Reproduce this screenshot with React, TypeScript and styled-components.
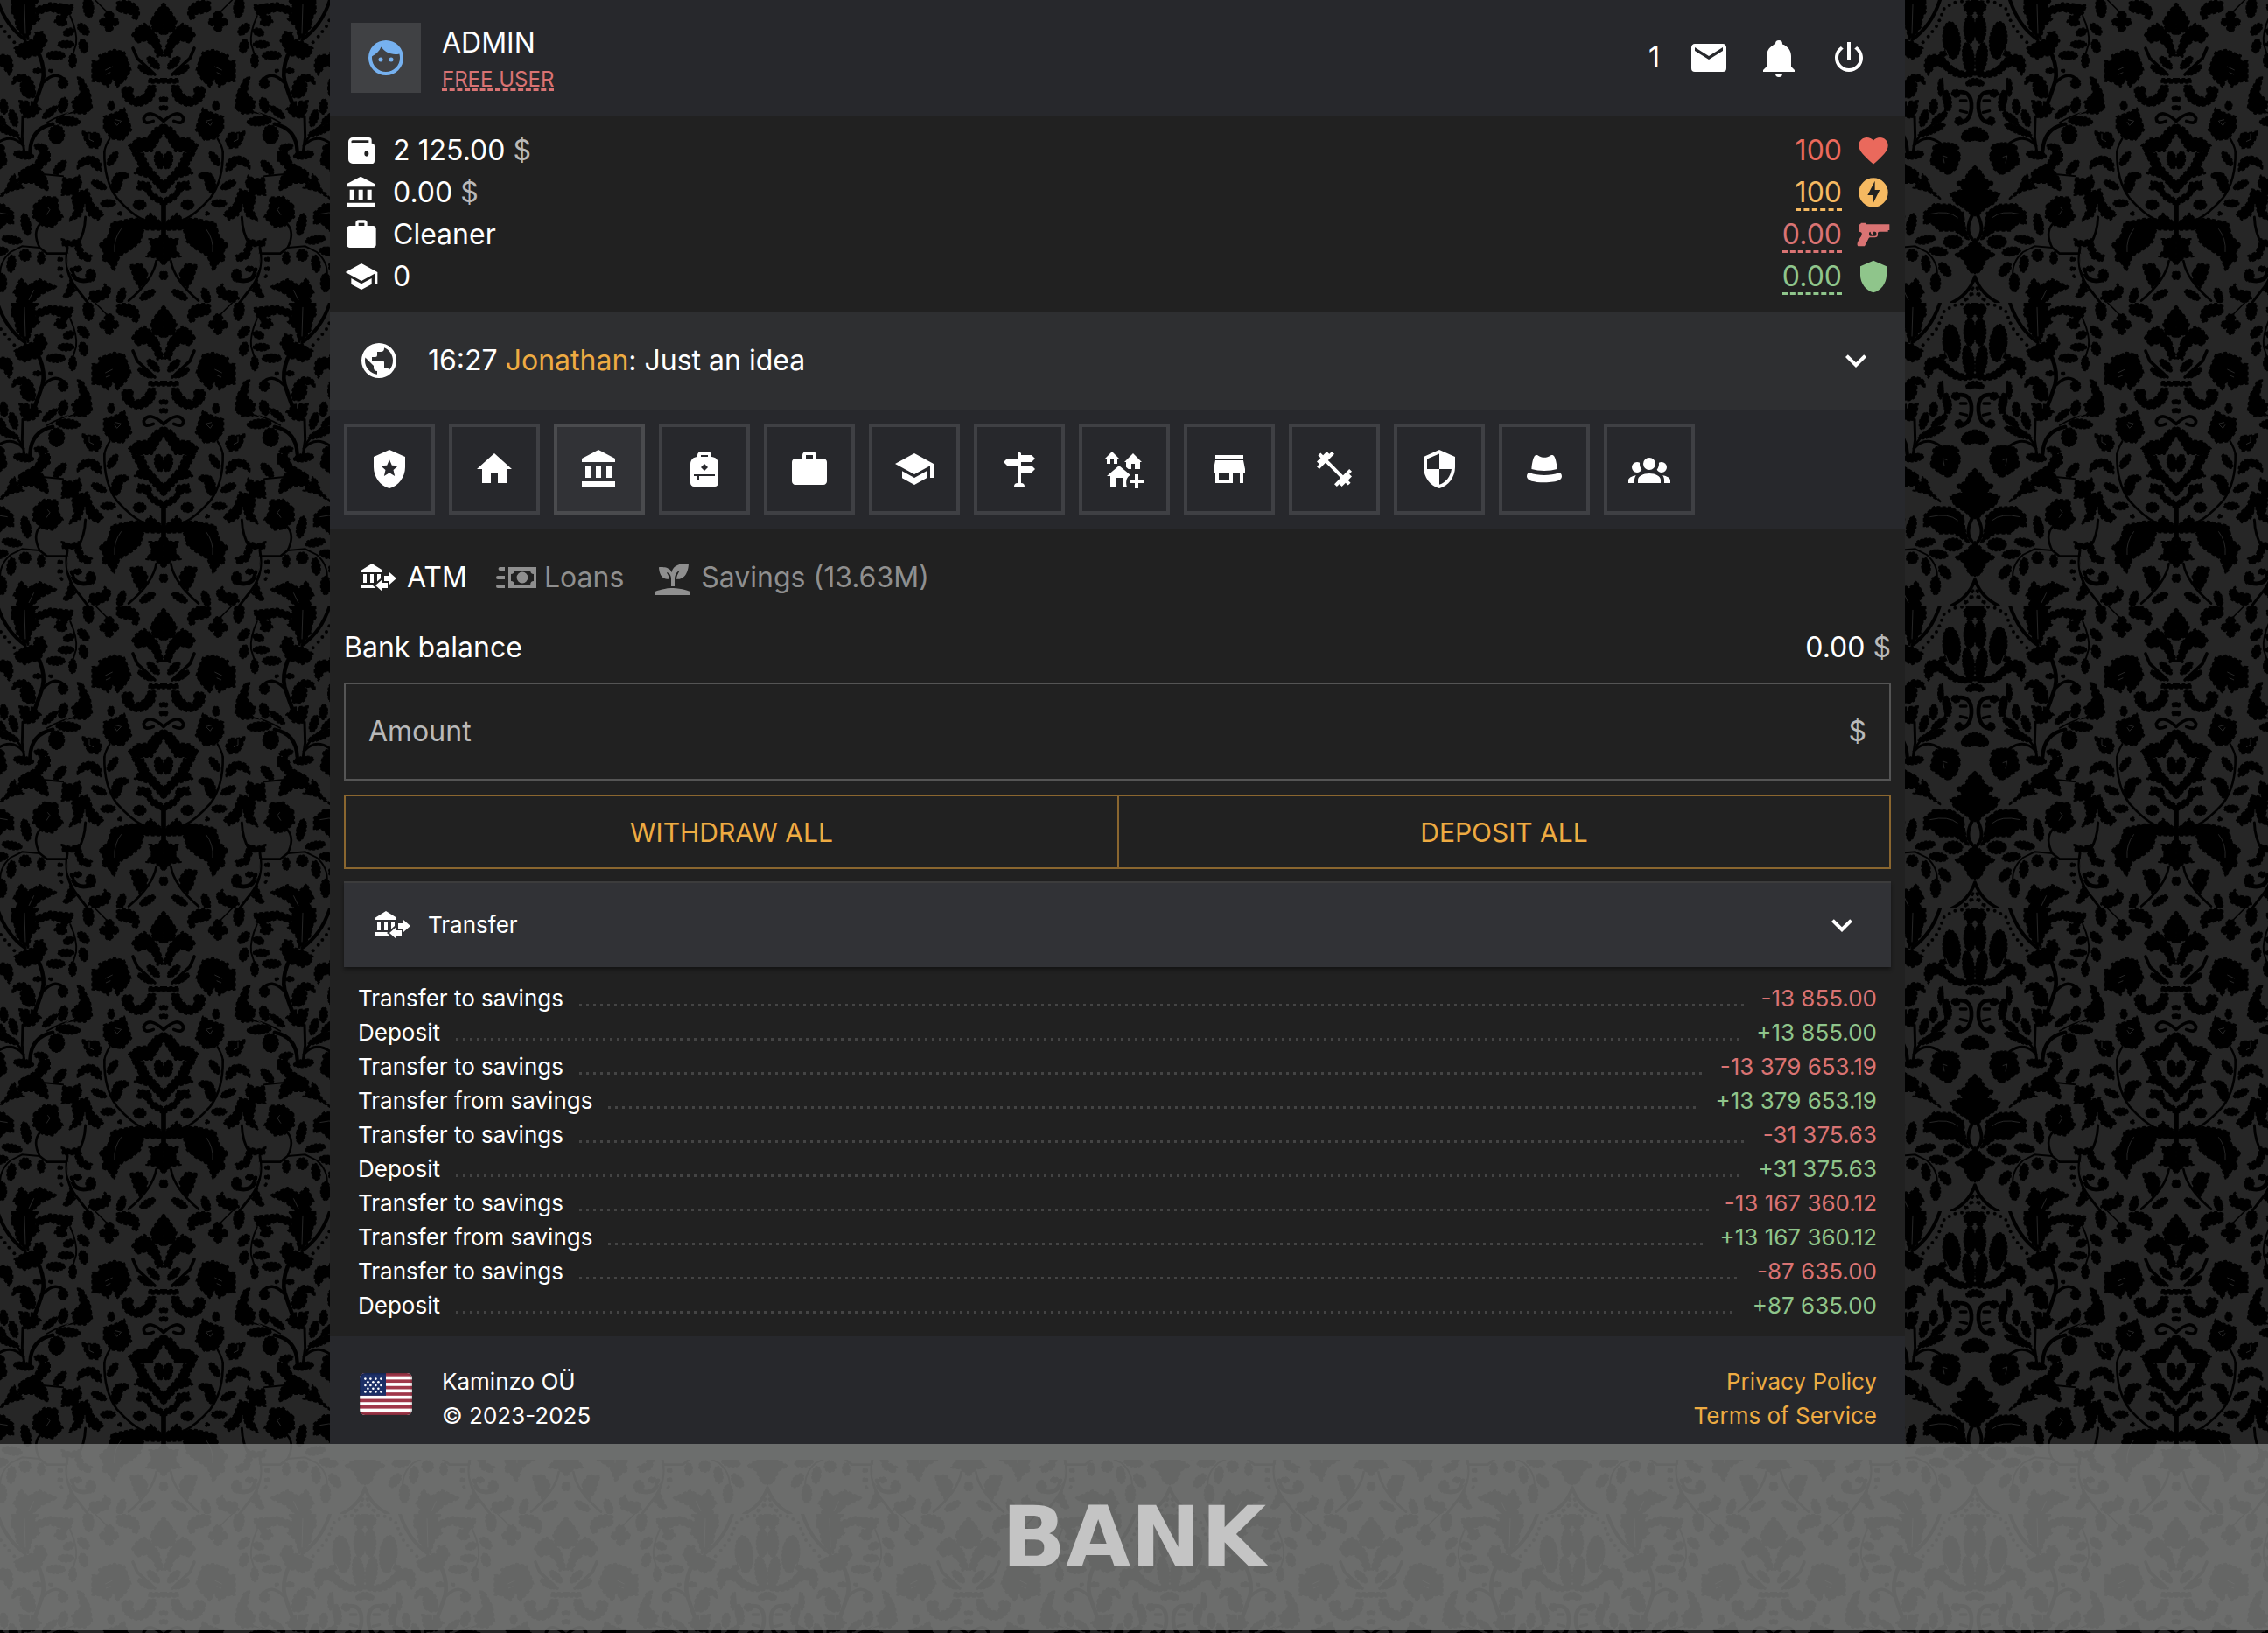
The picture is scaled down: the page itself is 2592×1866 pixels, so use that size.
import React from "react";
import styled, { createGlobalStyle } from "styled-components";

const color = {
  wall: "#262626",
  bar: "#27282c",
  body: "#212121",
  chat: "#2e2f31",
  panel: "#313236",
  muted: "#8f8f8f",
  soft: "#b9b9b9",
  accent: "#eeab42",
  accentLine: "#8a662f",
  red: "#d97373",
  heart: "#ea695c",
  amber: "#f5b961",
  green: "#8fc58b",
};

const GlobalStyle = createGlobalStyle`
  *, *::before, *::after { box-sizing: border-box; }
  body {
    margin: 0;
    background: ${color.wall};
    color: #fff;
    font-family: Inter, "Noto Sans", "Liberation Sans", sans-serif;
    font-size: 32px;
    line-height: 48px;
  }
  button, input { font: inherit; color: inherit; }
  ul { list-style: none; margin: 0; padding: 0; }
`;

/* ---------- icons ---------- */

const icons = {
  face: "M9,11.75A1.25,1.25 0 0,0 7.75,13A1.25,1.25 0 0,0 9,14.25A1.25,1.25 0 0,0 10.25,13A1.25,1.25 0 0,0 9,11.75M15,11.75A1.25,1.25 0 0,0 13.75,13A1.25,1.25 0 0,0 15,14.25A1.25,1.25 0 0,0 16.25,13A1.25,1.25 0 0,0 15,11.75M12,2A10,10 0 0,0 2,12A10,10 0 0,0 12,22A10,10 0 0,0 22,12A10,10 0 0,0 12,2M12,20C7.59,20 4,16.41 4,12C4,11.71 4,11.42 4.05,11.14C6.41,10.09 8.28,8.16 9.26,5.77C11.07,8.33 14.05,10 17.42,10C18.2,10 18.95,9.91 19.67,9.74C19.88,10.45 20,11.21 20,12C20,16.41 16.41,20 12,20Z",
  mail: "M20,8L12,13L4,8V6L12,11L20,6M20,4H4C2.89,4 2,4.89 2,6V18A2,2 0 0,0 4,20H20A2,2 0 0,0 22,18V6C22,4.89 21.1,4 20,4Z",
  bell: "M21,19V20H3V19L5,17V11C5,7.9 7.03,5.17 10,4.29C10,4.19 10,4.1 10,4A2,2 0 0,1 12,2A2,2 0 0,1 14,4C14,4.1 14,4.19 14,4.29C16.97,5.17 19,7.9 19,11V17L21,19M14,21A2,2 0 0,1 12,23A2,2 0 0,1 10,21",
  power: "M16.56,5.44L15.11,6.89C16.84,7.94 18,9.83 18,12A6,6 0 0,1 12,18A6,6 0 0,1 6,12C6,9.83 7.16,7.94 8.88,6.88L7.44,5.44C5.36,6.88 4,9.28 4,12A8,8 0 0,0 12,20A8,8 0 0,0 20,12C20,9.28 18.64,6.88 16.56,5.44M13,3H11V13H13",
  wallet: "M6,3H17A2,2 0 0,1 19,5V7A2,2 0 0,1 21,9V19A2,2 0 0,1 19,21H6A3,3 0 0,1 3,18V6A3,3 0 0,1 6,3M6,5A1,1 0 0,0 5,6L5.3,6.8L6,6.6H17V5H6M15.5,12.2A1.5,2 0 0,0 14,14A1.5,2 0 0,0 15.5,16A1.5,2 0 0,0 17,14A1.5,2 0 0,0 15.5,12.2Z",
  bank: "M4,10V17H7V10H4M10,10V17H13V10H10M2,22H21V19H2V22M16,10V17H19V10H16M11.5,1L2,6V8H21V6L11.5,1Z",
  work: "M20,6H16V4C16,2.89 15.11,2 14,2H10C8.89,2 8,2.89 8,4V6H4C2.89,6 2,6.89 2,8V19C2,20.11 2.89,21 4,21H20C21.11,21 22,20.11 22,19V8C22,6.89 21.11,6 20,6M14,6H10V4H14V6Z",
  school: "M12,3L1,9L12,15L21,10.09V17H23V9M5,13.18V17.18L12,21L19,17.18V13.18L12,17L5,13.18Z",
  heart: "M12,21.35L10.55,20.03C5.4,15.36 2,12.27 2,8.5C2,5.41 4.42,3 7.5,3C9.24,3 10.91,3.81 12,5.08C13.09,3.81 14.76,3 16.5,3C19.58,3 22,5.41 22,8.5C22,12.27 18.6,15.36 13.45,20.03L12,21.35Z",
  bolt: "M12,2A10,10 0 0,0 2,12A10,10 0 0,0 12,22A10,10 0 0,0 22,12A10,10 0 0,0 12,2M11.48,20V13.74H8L13,4V10.26H16.35L11.48,20Z",
  pistol: "M7,5H23V9H22V10H16A1,1 0 0,0 15,11V12A2,2 0 0,1 13,14H9.62C9.24,14 8.89,14.22 8.72,14.56L6.27,19.45C6.1,19.79 5.76,20 5.38,20H2C2,20 -1,20 3,14C3,14 6,10 2,10V5H3L3.5,4H6.5L7,5M14,12V11A1,1 0 0,0 13,10H12C12,10 11,11 12,12A2,2 0 0,1 10,10A1,1 0 0,0 9,11V12A1,1 0 0,0 10,13H13A1,1 0 0,0 14,12Z",
  shield: "M12,1L3,5V11C3,16.55 6.84,21.74 12,23C17.16,21.74 21,16.55 21,11V5L12,1Z",
  earth: "M17.9,17.39C17.64,16.59 16.89,16 16,16H15V13A1,1 0 0,0 14,12H8V10H10A1,1 0 0,0 11,9V7H13A2,2 0 0,0 15,5V4.59C17.93,5.77 20,8.64 20,12C20,14.08 19.2,15.97 17.9,17.39M11,19.93C7.05,19.44 4,16.08 4,12C4,11.38 4.08,10.78 4.21,10.21L9,15V16A2,2 0 0,0 11,18M12,2A10,10 0 0,0 2,12A10,10 0 0,0 12,22A10,10 0 0,0 22,12A10,10 0 0,0 12,2Z",
  chevron: "M7.41,8.58L12,13.17L16.59,8.58L18,10L12,16L6,10L7.41,8.58Z",
  shieldStar: "M12,1L3,5V11C3,16.55 6.84,21.74 12,23C17.16,21.74 21,16.55 21,11V5L12,1M15.08,16L12,14.15L8.93,16L9.74,12.5L7.03,10.16L10.6,9.86L12,6.58L13.4,9.85L16.97,10.15L14.26,12.5L15.08,16Z",
  home: "M10,20V14H14V20H19V12H22L12,3L2,12H5V20H10Z",
  backpack: "M16,5V4C16,2.9 15.11,2 14,2H10C8.9,2 8,2.9 8,4V5C5.79,5 4,6.79 4,9V20C4,21.1 4.9,22 6,22H18C19.11,22 20,21.11 20,20V9C20,6.79 18.21,5 16,5M10,4H14V5H10V4M12,9L14,11L12,13L10,11L12,9M18,16H9V18H8V16H6V15H18V16Z",
  signpost: "M11,4V3L12,2L13,3V4H19L21,6L19,8H13V10H19L21,12L19,14H13V20A2,2 0 0,1 15,22H9A2,2 0 0,1 11,20V10H5L3,8L5,6H11V4Z",
  housesPlus: "M9,10L2,16H4V22H7V17H11V22H13.4C12.8,20 13,17.8 14.2,16.4L15.4,15.4L9,10M5,2L9,6H8V9H6V6H4V9H2V6H1L5,2M17,3L22,8H21V12H18V9H16V12H14.34L13,10.87V8H12L17,3M18,15H20V18H23V20H20V23H18V20H15V18H18V15Z",
  store: "M12,18H6V14H12M21,14V12L20,7H4L3,12V14H4V20H14V14H18V20H20V14M20,4H4V6H20V4Z",
  dumbbell: "M20.57,14.86L22,13.43L20.57,12L17,15.57L8.43,7L12,3.43L10.57,2L9.14,3.43L7.71,2L5.57,4.14L4.14,2.71L2.71,4.14L4.14,5.57L2,7.71L3.43,9.14L2,10.57L3.43,12L7,8.43L15.57,17L12,20.57L13.43,22L14.86,20.57L16.29,22L18.43,19.86L19.86,21.29L21.29,19.86L19.86,18.43L22,16.29L20.57,14.86Z",
  security: "M12,12H19C18.47,16.11 15.72,19.78 12,20.92V12H5V6.3L12,3.19M12,1L3,5V11C3,16.55 6.84,21.73 12,23C17.16,21.73 21,16.55 21,11V5L12,1Z",
  fedora: "M12,13C9.4,13 6.9,12.6 4.7,12C4.8,10 5.3,6.5 6.2,5C6.7,4 7.6,3.8 8.4,4.2C9.5,4.8 10.8,5.4 12,5.4C13.2,5.4 14.5,4.8 15.6,4.2C16.4,3.8 17.3,4 17.8,5C18.7,6.5 19.2,10 19.3,12C17.1,12.6 14.6,13 12,13M3.6,14C2.5,14.3 2,15 2,16.2C2,18.5 6,19.6 12,19.6C18,19.6 22,18.5 22,16.2C22,15 21.5,14.3 20.4,14C18,15.1 15,15.5 12,15.5C9,15.5 6,15.1 3.6,14Z",
  group: "M12,5.5A3.5,3.5 0 0,1 15.5,9A3.5,3.5 0 0,1 12,12.5A3.5,3.5 0 0,1 8.5,9A3.5,3.5 0 0,1 12,5.5M5,8C5.56,8 6.08,8.15 6.53,8.42C6.38,9.85 6.8,11.27 7.66,12.38C7.16,13.34 6.16,14 5,14A3,3 0 0,1 2,11A3,3 0 0,1 5,8M19,8A3,3 0 0,1 22,11A3,3 0 0,1 19,14C17.84,14 16.84,13.34 16.34,12.38C17.2,11.27 17.62,9.85 17.47,8.42C17.92,8.15 18.44,8 19,8M5.5,18.25C5.5,16.18 8.41,14.5 12,14.5C15.59,14.5 18.5,16.18 18.5,18.25V20H5.5V18.25M0,20V18.5C0,17.11 1.89,15.94 4.45,15.6C3.86,16.28 3.5,17.22 3.5,18.25V20H0M24,20H20.5V18.25C20.5,17.22 20.14,16.28 19.55,15.6C22.11,15.94 24,17.11 24,18.5V20Z",
  bankTransfer: "M15,14V11H18V9L22,12.5L18,16V14H15M14,7.7V9H2V7.7L8,4L14,7.7M7,10H9V15H7V10M3,10H5V15H3V10M13,10V12.5L11,14.3V10H13M9.1,16L8.5,16.5L10.2,18H2V16H9.1M17,15V18H14V20L10,16.5L14,13V15H17Z",
  cashFast: "M7.5,6H23.5V18H7.5V6M10.9,8A2,2 0 0,1 9,10V14A2,2 0 0,1 10.9,16H20.1A2,2 0 0,1 22,14V10A2,2 0 0,1 20.1,8H10.9M15.5,8.8A3.2,3.2 0 0,1 18.7,12A3.2,3.2 0 0,1 15.5,15.2A3.2,3.2 0 0,1 12.3,12A3.2,3.2 0 0,1 15.5,8.8M2.8,6H5.5V8H2.8A1,1 0 0,1 2.8,6M1.5,11H5.5V13H1.5A1,1 0 0,1 1.5,11M1.5,16H5.5V18H1.5A1,1 0 0,1 1.5,16Z",
  sprout: "M2,22V20C2,20 7,18 12,18C17,18 22,20 22,20V22H2M11.3,9.1C10.1,5.2 4,6.1 4,6.1C4,6.1 4.2,13.9 9.9,12.7C9.5,9.8 8,9 8,9C10.8,9 11,12.4 11,12.4V17C11.3,17 11.7,17 12,17C12.3,17 12.7,17 13,17V12.8C13,12.8 13,8.9 16,7.9C16,7.9 14,10.9 14,12.9C21,13.6 21,4 21,4C21,4 12.1,3 11.3,9.1Z",
};

type IconName = keyof typeof icons;

const IconSvg = styled.svg<{ $size: number }>`
  display: block;
  flex: none;
  width: ${(p) => p.$size}px;
  height: ${(p) => p.$size}px;
  fill: currentColor;
`;

const Icon = ({ name, size = 48 }: { name: IconName; size?: number }) => (
  <IconSvg $size={size} viewBox="0 0 24 24" aria-hidden="true">
    <path d={icons[name]} fillRule={name === "dumbbell" ? "nonzero" : "evenodd"} />
  </IconSvg>
);

/* ---------- damask wallpaper ---------- */

const Wallpaper = styled.svg`
  position: fixed;
  inset: 0;
  z-index: -1;
  width: 100%;
  height: 100%;
`;

// [cx, cy, rx, ry, rotation]
type Leaf = [number, number, number, number, number?];

const upper = {
  leaves: [
    [18, 100, 20, 48, 0], [80, 138, 30, 64, 6], [22, 200, 20, 54, 8], [258, 242, 16, 9], [302, 242, 6, 6],
    [320, 190, 33, 15], [365, 110, 20, 13, -20], [415, 100, 25, 15, 45], [355, 152, 28, 13], [415, 158, 15, 24, -15],
    [378, 208, 13, 25], [432, 25, 18, 36, -6], [345, 285, 17, 19], [655, 215, 28, 13, 45], [628, 240, 30, 12, 30],
    [685, 340, 10, 8], [685, 370, 10, 8], [345, 360, 16, 27, 15], [300, 385, 32, 12, -40], [362, 415, 42, 16, 5],
    [323, 461, 27, 32], [270, 505, 24, 12, 10], [95, 345, 14, 36, 8], [142, 365, 14, 26, -5], [175, 405, 14, 30, -18],
    [122, 405, 32, 13, 35], [148, 445, 50, 13, 22], [100, 507, 45, 18], [65, 320, 15, 13], [55, 415, 14, 14],
    [10, 282, 22, 12, 20], [10, 460, 38, 22, 20], [510, 362, 12, 17], [118, 300, 9, 30], [503, 52, 16, 14],
    [484, 75, 14, 14], [522, 75, 14, 14], [503, 95, 14, 14], [503, 75, 18, 18], [110, 185, 12, 10],
  ] as Leaf[],
  shapes: [
    "M0 0L30 5L40 25L20 55L0 40Z",
    "M0 245Q60 255 95 210Q125 175 165 195Q182 230 160 257Q150 245 138 225Q110 225 90 250Q50 275 0 258Z",
    "M170 0L262 0L240 30L265 65L238 90L225 135L205 120L185 92L180 60L168 40Z",
    "M240 30L300 10L382 18L372 45L355 60L358 84L335 90L316 75L325 55L345 50L300 36L255 50Z",
    "M178 165L210 145L245 135L250 112L275 108L290 140L275 165L265 192L240 190L215 202L188 190Z",
    "M172 290Q168 255 210 255Q252 268 250 330Q225 345 203 320Q196 290 203 280Q188 275 172 290Z",
    "M530 8Q570 -8 600 22Q615 50 595 68Q580 65 583 48Q560 48 530 36Z",
    "M690 10L665 40L645 72L655 105L690 120Z",
    "M582 120L598 95L625 80L650 100L672 130L690 190L668 195L655 160L630 138L600 147Z",
    "M445 210L470 208L468 190L520 170L555 178L568 210L578 240L560 270L530 300L518 268L500 298L470 280L445 278Z",
    "M640 270H690V284H640Z",
    "M548 305Q545 355 605 364Q668 350 662 295Q635 285 632 308Q618 335 590 335Q580 325 586 302Q565 290 548 305Z",
    "M395 265L412 268L425 295L438 318L445 370L420 390L385 388L375 350L405 320Z",
    "M195 345L245 350L270 375L245 400L215 405L200 380Z",
    "M485 400L530 385L555 370L570 410L580 445L550 480L510 475L485 440Z",
    "M410 450L435 455L465 455L478 485L465 508L435 505L420 480Z",
    "M570 500L600 475L635 472L660 440L690 425V455L650 519H585Z",
  ],
  stems: [
    ["M120 0Q150 90 215 135", 12], ["M265 190Q285 240 275 280Q262 320 245 365", 14], ["M280 280Q320 240 352 275", 11],
    ["M370 55Q395 110 390 150L378 190", 6], ["M455 0L500 45", 5], ["M585 165L600 200L660 255", 11],
    ["M290 420Q340 390 380 385", 5], ["M232 519Q235 440 310 425", 13], ["M207 400L205 470L212 519", 9],
    ["M112 270L108 340Q80 390 150 430Q190 460 205 490", 8], ["M120 490Q170 455 210 500", 9],
    ["M75 320Q8 300 12 370Q18 425 60 420", 14], ["M30 345L50 345M28 385L50 380", 10],
    ["M505 475Q490 500 487 519", 7], ["M690 415Q640 370 622 405Q622 430 655 415", 11],
  ] as [string, number][],
  veins: ["M213 15L216 115", "M46 180V215", "M90 195L100 170", "M490 240L515 228M492 255L508 248", "M525 410L545 415L530 430L522 418", "M435 458V478L450 485", "M350 395L385 375", "M232 340V362"],
};

const lower = {
  leaves: [
    [210, 12, 35, 14, 8], [335, 55, 30, 15, -50], [515, 25, 28, 13, -55], [468, 115, 28, 13, 25], [500, 178, 26, 13],
    [530, 108, 18, 36, 15], [552, 83, 18, 12], [540, 213, 7, 7], [675, 30, 16, 30, -10], [608, 183, 22, 17],
    [218, 250, 16, 38, -12], [170, 303, 35, 14, 10], [125, 343, 32, 15, -8], [75, 310, 33, 22], [168, 385, 15, 30, 8],
    [103, 405, 28, 16, -50], [135, 450, 17, 32], [215, 356, 20, 20], [270, 366, 13, 22], [440, 425, 17, 22],
    [395, 403, 14, 10], [335, 370, 9, 7], [335, 402, 9, 7], [340, 428, 5, 5], [545, 495, 14, 28, 18],
    [635, 492, 30, 13, -30], [685, 425, 9, 14], [8, 470, 5, 5], [12, 490, 6, 6], [30, 507, 6, 6],
  ] as Leaf[],
  shapes: [
    "M55 0H145L153 40L120 65L90 80L65 60L50 20Z",
    "M268 0H300L300 30L268 60L290 95L295 135L270 125L245 108L192 108L195 70L250 40Z",
    "M165 92L178 78L190 105L212 125L165 135L115 165L150 130Z",
    "M395 60Q390 20 440 16Q482 25 475 67Q450 64 438 42Q420 42 395 60Z",
    "M345 90L380 95L400 82L410 112L388 148L340 150Z",
    "M375 160L390 140L430 130L448 180L485 215L465 235L435 220L418 185L405 222L365 240L385 200Z",
    "M340 300L370 308L400 300L415 345L445 358L435 378L400 365L385 325L345 325Z",
    "M580 0L620 5L640 50L690 105V145L640 90L590 75L607 50Z",
    "M598 130L605 102L645 108L650 140L690 165V185L650 165L625 132Z",
    "M470 320L500 290L512 245L580 230L625 232L645 212L690 250V270L622 268L610 310L580 335L540 358L520 410L500 380L480 372L485 345Z",
    "M640 300L668 300L690 280V390L665 365L630 360L650 335Z",
    "M245 185L280 155L325 158L330 200L345 225L310 260L275 255L242 225Z",
    "M35 255L40 210L80 182L140 180L175 210V250L150 245L122 272L70 272L20 305Z",
    "M0 50L22 70L35 95L65 108L40 130L85 145L70 175L30 200L10 220H0Z",
    "M0 300L30 330L70 355L40 370L20 410L0 420Z",
    "M175 485L200 435L225 460L265 438L325 465L270 490L240 519H185L190 500Z",
    "M370 440L388 475L365 500L345 500L355 480Z",
    "M440 480L480 475L488 455L510 472L500 500L455 519L432 505Z",
    "M575 390L612 385L635 415L630 450L608 468L590 440Z",
  ],
  stems: [
    ["M245 75L345 85", 6], ["M487 0Q485 100 530 160Q580 215 620 235", 8], ["M422 225Q420 280 395 320", 9],
    ["M265 250Q240 280 265 330L290 350L360 350", 8], ["M265 330L205 325L165 345Q125 380 130 430", 6],
    ["M360 330Q345 420 400 480L430 519", 9], ["M375 405Q380 452 432 442", 15], ["M10 220Q35 270 10 300", 12],
    ["M0 430Q20 490 80 519", 12], ["M665 375Q655 440 570 512", 8], ["M686 180V300", 9],
  ] as [string, number][],
  veins: ["M545 265Q518 300 522 345", "M58 228Q90 200 155 215", "M95 20L110 15L105 40", "M292 190L300 200L288 218", "M362 350Q355 400 375 420", "M245 475L228 510", "M420 180V215"],
};

const Motif = ({ part, y }: { part: typeof upper; y: number }) => (
  <g transform={`translate(0 ${y})`}>
    <g stroke="#000" strokeWidth={4} strokeLinejoin="round">
      {part.leaves.map(([cx, cy, rx, ry, r = 0], i) => (
        <ellipse key={i} cx={cx} cy={cy} rx={rx} ry={ry} transform={`rotate(${r} ${cx} ${cy})`} strokeDasharray="9 5" />
      ))}
      <path d={part.shapes.join("")} strokeWidth={6} strokeDasharray="12 7" />
    </g>
    {part.stems.map(([d, w], i) => (
      <path key={i} d={d} fill="none" stroke="#000" strokeWidth={w} strokeLinecap="round" />
    ))}
    <path d={part.veins.join("")} fill="none" stroke={color.wall} strokeWidth={3} />
  </g>
);

const beads = [[45, 5], [68, 8], [88, 18], [106, 30], [114, 50], [122, 70], [132, 90], [146, 108], [160, 125], [178, 145]];

const Damask = () => (
  <Wallpaper aria-hidden="true">
    <defs>
      <g id="half">
        <Motif part={upper} y={0} />
        <Motif part={lower} y={519} />
        {beads.map(([x, y]) => (
          <circle key={x} cx={x} cy={y} r={6} />
        ))}
      </g>
      <pattern id="damask" x="-43" y="0" width="460" height="346" patternUnits="userSpaceOnUse">
        <rect width="460" height="346" fill={color.wall} />
        <use href="#half" transform="scale(.3333)" />
        <use href="#half" transform="translate(460 0) scale(-.3333 .3333)" />
      </pattern>
    </defs>
    <rect width="100%" height="100%" fill="url(#damask)" />
  </Wallpaper>
);

/* ---------- shell ---------- */

const Page = styled.div`
  padding-right: 38px;
`;

const Shell = styled.div`
  max-width: 1800px;
  margin: 0 auto;
  background: ${color.body};
`;

const Header = styled.header`
  display: flex;
  align-items: center;
  justify-content: space-between;
  min-height: 132px;
  padding: 24px;
  background: ${color.bar};
`;

const Profile = styled.div`
  display: flex;
  gap: 24px;
`;

const Avatar = styled.div`
  display: grid;
  place-items: center;
  width: 80px;
  height: 80px;
  background: #404144;
  color: #76b1f0;
`;

const Identity = styled.div`
  display: flex;
  flex-direction: column;
  align-items: flex-start;
  gap: 6px;
  line-height: 46px;
`;

const Dashed = styled.a<{ $color: string; $small?: boolean }>`
  display: block;
  border: solid transparent;
  border-width: 3px 0;
  border-bottom: 3px dashed ${(p) => p.$color};
  color: ${(p) => p.$color};
  font-size: ${(p) => (p.$small ? 24 : 32)}px;
  line-height: ${(p) => (p.$small ? 20 : 36)}px;
  text-decoration: none;
`;

const Actions = styled.div`
  display: flex;
  align-items: center;
`;

const Unread = styled.span`
  margin-right: 16px;
`;

const IconButton = styled.button`
  display: grid;
  place-items: center;
  width: 80px;
  height: 80px;
  padding: 0;
  border: 0;
  background: none;
`;

const Stats = styled.section`
  display: flex;
  justify-content: space-between;
  padding: 16px;
`;

const StatRow = styled.li<{ $end?: boolean; $color?: string }>`
  display: flex;
  align-items: center;
  justify-content: ${(p) => (p.$end ? "flex-end" : "flex-start")};
  gap: 16px;
  height: 48px;
  color: ${(p) => p.$color ?? "#fff"};
`;

const Currency = styled.span`
  color: ${color.soft};
`;

const Chat = styled.button`
  display: flex;
  align-items: center;
  width: 100%;
  height: 112px;
  padding: 0 32px;
  border: 0;
  background: ${color.chat};
  text-align: left;
`;

const ChatText = styled.span`
  flex: 1;
  margin-left: 32px;
`;

const Author = styled.span`
  color: ${color.accent};
`;

const Nav = styled.nav`
  display: flex;
  flex-wrap: wrap;
  gap: 16px;
  padding: 16px;
  background: ${color.bar};
`;

const NavButton = styled.button<{ $active: boolean }>`
  display: grid;
  place-items: center;
  width: 104px;
  height: 104px;
  padding: 0;
  border: 4px solid ${(p) => (p.$active ? "#4a4b4e" : "#3f4044")};
  background: ${(p) => (p.$active ? "#313236" : "transparent")};
`;

/* ---------- bank ---------- */

const Bank = styled.main`
  padding: 0 16px 16px;
`;

const Tabs = styled.div`
  display: flex;
  height: 112px;
`;

const Tab = styled.button<{ $active: boolean }>`
  display: flex;
  align-items: center;
  gap: 8px;
  padding: 0 16px;
  border: 0;
  background: none;
  color: ${(p) => (p.$active ? "#fff" : color.muted)};
`;

const Balance = styled.div`
  display: flex;
  justify-content: space-between;
  margin-bottom: 16px;
`;

const Field = styled.div`
  display: flex;
  align-items: center;
  height: 112px;
  padding: 0 26px;
  border: 2px solid #555;
  color: ${color.soft};
`;

const AmountInput = styled.input`
  flex: 1;
  min-width: 0;
  padding: 0;
  border: 0;
  outline: 0;
  background: none;
  color: #fff;
  &::placeholder {
    color: ${color.soft};
    opacity: 1;
  }
`;

const ButtonPair = styled.div`
  display: grid;
  grid-template-columns: 1fr 1fr;
  margin: 16px 0 14px;
  border: 2px solid ${color.accentLine};
`;

const AllButton = styled.button`
  height: 81px;
  padding: 0;
  border: 0;
  background: none;
  color: ${color.accent};
  font-size: 30px;
  & + & {
    border-left: 2px solid ${color.accentLine};
  }
`;

const Transfer = styled.button`
  display: flex;
  align-items: center;
  gap: 16px;
  width: 100%;
  height: 98px;
  padding: 0 32px;
  border: 0;
  border-top: 2px solid #3c3c3c;
  background: ${color.panel};
  box-shadow: 0 3px 4px rgba(0, 0, 0, 0.4);
  font-size: 26px;
  text-align: left;
`;

const Grow = styled.span`
  flex: 1;
`;

const History = styled.ul`
  padding: 16px 16px 0;
  font-size: 26px;
  line-height: 39px;
`;

const Entry = styled.li`
  display: flex;
  gap: 18px;
`;

const Leader = styled.span`
  flex: 1;
  height: 29px;
  background: repeating-linear-gradient(90deg, #444 0 3px, transparent 3px 8px) bottom / 100% 3px no-repeat;
`;

const Sum = styled.span<{ $negative: boolean }>`
  color: ${(p) => (p.$negative ? color.red : color.green)};
`;

const Footer = styled.footer`
  display: flex;
  justify-content: space-between;
  padding: 32px 32px 31px;
  background: ${color.bar};
  font-size: 26px;
  line-height: 39px;
`;

const Company = styled.div`
  display: flex;
  gap: 34px;
`;

const FlagSvg = styled.svg`
  display: block;
  width: 60px;
  height: 48px;
  margin: 10px 0 0 2px;
`;

const Links = styled.div`
  display: flex;
  flex-direction: column;
  text-align: right;
`;

const FooterLink = styled.a`
  color: ${color.accent};
  text-decoration: none;
`;

const Caption = styled.div`
  position: fixed;
  right: 0;
  bottom: 3px;
  left: 0;
  display: grid;
  place-items: center;
  height: 213px;
  background: rgba(126, 128, 126, 0.8);
  color: #c4c4c4;
  font: bold 96px/112px "DejaVu Sans", sans-serif;
`;

const Flag = () => (
  <FlagSvg viewBox="0 0 60 48" role="img" aria-label="English">
    <clipPath id="flagShape">
      <rect width="60" height="48" rx="6" />
    </clipPath>
    <g clipPath="url(#flagShape)">
      <rect width="60" height="48" fill="#fff" />
      {[0, 1, 2, 3, 4, 5, 6].map((i) => (
        <rect key={i} y={(i * 96) / 13} width="60" height={48 / 13} fill="#a0374a" />
      ))}
      <rect width="30" height="25.8" fill="#1c2f66" />
      {[0, 1, 2, 3, 4].map((row) =>
        Array.from({ length: row % 2 ? 3 : 4 }, (_, col) => (
          <circle key={`${row}-${col}`} cx={6.4 + col * 6 + (row % 2 ? 3 : 0)} cy={6.6 + row * 3.7} r="1.3" fill="#fff" />
        ))
      )}
      <rect x=".75" y=".75" width="58.5" height="46.5" rx="5.5" fill="none" stroke="#000" strokeOpacity=".18" strokeWidth="1.5" />
    </g>
  </FlagSvg>
);

const navItems: [IconName, string][] = [
  ["shieldStar", "Headquarters"], ["home", "Home"], ["bank", "Bank"], ["backpack", "Inventory"], ["work", "Work"],
  ["school", "School"], ["signpost", "Travel"], ["housesPlus", "Real estate"], ["store", "Store"], ["dumbbell", "Gym"],
  ["security", "Security"], ["fedora", "Crime"], ["group", "Players"],
];

const tabs: [IconName, string][] = [["bankTransfer", "ATM"], ["cashFast", "Loans"], ["sprout", "Savings (13.63M)"]];

const history: [string, string][] = [
  ["Transfer to savings", "-13 855.00"],
  ["Deposit", "+13 855.00"],
  ["Transfer to savings", "-13 379 653.19"],
  ["Transfer from savings", "+13 379 653.19"],
  ["Transfer to savings", "-31 375.63"],
  ["Deposit", "+31 375.63"],
  ["Transfer to savings", "-13 167 360.12"],
  ["Transfer from savings", "+13 167 360.12"],
  ["Transfer to savings", "-87 635.00"],
  ["Deposit", "+87 635.00"],
];

export default function App() {
  return (
    <Page>
      <GlobalStyle />
      <Damask />
      <Shell>
        <Header>
          <Profile>
            <Avatar>
              <Icon name="face" />
            </Avatar>
            <Identity>
              <span>ADMIN</span>
              <Dashed href="#plan" $color={color.red} $small>FREE USER</Dashed>
            </Identity>
          </Profile>
          <Actions>
            <Unread>1</Unread>
            <IconButton aria-label="Messages"><Icon name="mail" /></IconButton>
            <IconButton aria-label="Notifications"><Icon name="bell" /></IconButton>
            <IconButton aria-label="Log out"><Icon name="power" /></IconButton>
          </Actions>
        </Header>

        <Stats>
          <ul>
            <StatRow><Icon name="wallet" size={40} /><span>2 125.00 <Currency>$</Currency></span></StatRow>
            <StatRow><Icon name="bank" size={40} /><span>0.00 <Currency>$</Currency></span></StatRow>
            <StatRow><Icon name="work" size={40} /><span>Cleaner</span></StatRow>
            <StatRow><Icon name="school" size={40} /><span>0</span></StatRow>
          </ul>
          <ul>
            <StatRow $end $color={color.heart}><span>100</span><Icon name="heart" size={40} /></StatRow>
            <StatRow $end $color={color.amber}><Dashed href="#energy" $color={color.amber}>100</Dashed><Icon name="bolt" size={40} /></StatRow>
            <StatRow $end $color={color.red}><Dashed href="#attack" $color={color.red}>0.00</Dashed><Icon name="pistol" size={40} /></StatRow>
            <StatRow $end $color={color.green}><Dashed href="#defence" $color={color.green}>0.00</Dashed><Icon name="shield" size={40} /></StatRow>
          </ul>
        </Stats>

        <Chat aria-expanded="false">
          <Icon name="earth" />
          <ChatText>16:27 <Author>Jonathan</Author>: Just an idea</ChatText>
          <Icon name="chevron" />
        </Chat>

        <Nav>
          {navItems.map(([icon, label]) => (
            <NavButton key={label} aria-label={label} $active={icon === "bank"}>
              <Icon name={icon} />
            </NavButton>
          ))}
        </Nav>

        <Bank>
          <Tabs role="tablist">
            {tabs.map(([icon, label], i) => (
              <Tab key={label} role="tab" aria-selected={i === 0} $active={i === 0}>
                <Icon name={icon} />
                {label}
              </Tab>
            ))}
          </Tabs>
          <Balance>
            <span>Bank balance</span>
            <span>0.00 <Currency>$</Currency></span>
          </Balance>
          <Field>
            <AmountInput aria-label="Amount" placeholder="Amount" inputMode="decimal" />
            <span>$</span>
          </Field>
          <ButtonPair>
            <AllButton>WITHDRAW ALL</AllButton>
            <AllButton>DEPOSIT ALL</AllButton>
          </ButtonPair>
          <Transfer aria-expanded="false">
            <Icon name="bankTransfer" />
            <Grow>Transfer</Grow>
            <Icon name="chevron" />
          </Transfer>
          <History>
            {history.map(([label, sum], i) => (
              <Entry key={i}>
                <span>{label}</span>
                <Leader />
                <Sum $negative={sum.startsWith("-")}>{sum}</Sum>
              </Entry>
            ))}
          </History>
        </Bank>

        <Footer>
          <Company>
            <Flag />
            <div>
              Kaminzo OÜ
              <br />© 2023-2025
            </div>
          </Company>
          <Links>
            <FooterLink href="#privacy">Privacy Policy</FooterLink>
            <FooterLink href="#terms">Terms of Service</FooterLink>
          </Links>
        </Footer>
      </Shell>
      <Caption>BANK</Caption>
    </Page>
  );
}
